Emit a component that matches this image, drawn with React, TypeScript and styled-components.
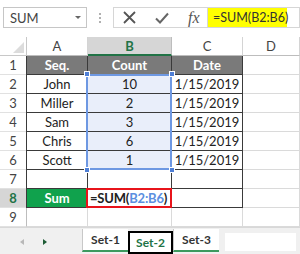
import React from "react";
import styled, { createGlobalStyle, css } from "styled-components";

const Global = createGlobalStyle`
  html, body { margin: 0; padding: 0; background: #fff; }
  body { font-family: Lato, "Open Sans", sans-serif; }
  * { box-sizing: border-box; }
`;

const Page = styled.div`
  width: 300px;
  height: 254px;
  overflow: hidden;
  display: flex;
  flex-direction: column;
  background: #fff;
`;

const FormulaBar = styled.div`
  height: 37px;
  display: flex;
  align-items: flex-start;
  padding: 7px 0 0 3px;
`;

const NameBox = styled.div`
  width: 84px;
  height: 21px;
  border: 1px solid #c6c6c6;
  display: flex;
  align-items: center;
  justify-content: space-between;
  padding: 0 5px 0 6px;
  font-size: 13px;
  color: #444;
`;

const Caret = styled.span`
  width: 0;
  height: 0;
  border-left: 3px solid transparent;
  border-right: 3px solid transparent;
  border-top: 3px solid #666;
`;

const Dots = styled.div`
  width: 26px;
  height: 21px;
  display: flex;
  flex-direction: column;
  align-items: center;
  justify-content: center;
  gap: 2px;
  span { width: 2px; height: 2px; background: #b0b0b0; }
`;

const IconBox = styled.div`
  width: 94px;
  height: 21px;
  border: 1px solid #d6d6d6;
  border-right: none;
  display: flex;
  align-items: center;
  padding-left: 8px;
  gap: 18px;
`;

const Fx = styled.span`
  font-family: "Liberation Serif", serif;
  font-style: italic;
  font-size: 16px;
  color: #555;
  margin-left: 1px;
`;

const FormulaInput = styled.div`
  flex: 1;
  height: 21px;
  border: 1px solid #d6d6d6;
  display: flex;
  align-items: stretch;
`;

const Highlight = styled.span`
  background: #ffff00;
  font-size: 12.5px;
  color: #333;
  display: flex;
  align-items: center;
  padding: 0 0 0 5px;
  width: 79px;
  white-space: nowrap;
`;

const Sheet = styled.div`
  display: grid;
  grid-template-columns: 27px 61px 84px 71px 1fr;
  grid-template-rows: repeat(10, 19px);
`;

const Corner = styled.div`
  border-right: 1px solid #c8c8c8;
  border-bottom: 1px solid #c8c8c8;
  position: relative;
  &::after {
    content: "";
    position: absolute;
    right: 2px;
    bottom: 2px;
    width: 0;
    height: 0;
    border-left: 11px solid transparent;
    border-bottom: 11px solid #dcdcdc;
  }
`;

const ColHead = styled.div<{ $active?: boolean }>`
  display: flex;
  align-items: center;
  justify-content: center;
  font-size: 13px;
  color: #444;
  border-right: 1px solid #d4d4d4;
  border-bottom: 1px solid #bdbdbd;
  ${(p) =>
    p.$active &&
    css`
      background: #d6d6d6;
      color: #217346;
      font-weight: 700;
      border-bottom: 2px solid #217346;
      border-right-color: #bdbdbd;
    `}
`;

const RowHead = styled.div<{ $active?: boolean }>`
  display: flex;
  align-items: center;
  justify-content: center;
  font-size: 13px;
  color: #444;
  border-right: 1px solid #bdbdbd;
  border-bottom: 1px solid #e1e1e1;
  ${(p) =>
    p.$active &&
    css`
      background: #d6d6d6;
      color: #217346;
      font-weight: 700;
    `}
`;

type Kind = "plain" | "head" | "sum" | "sel" | "formula";

const Cell = styled.div<{ $kind?: Kind; $table?: boolean; $left?: boolean; $top?: boolean; $edge?: "top" | "bottom" | "mid" }>`
  position: relative;
  display: flex;
  align-items: center;
  justify-content: center;
  font-size: 13px;
  color: #222;
  white-space: nowrap;
  border-right: 1px solid #dadada;
  border-bottom: 1px solid #dadada;
  ${(p) =>
    p.$table &&
    css`
      border-right-color: #3a3a3a;
      border-bottom-color: #3a3a3a;
    `}
  ${(p) => p.$left && css`box-shadow: -1px 0 0 #3a3a3a;`}
  ${(p) =>
    p.$kind === "head" &&
    css`
      background: #7a7a7a;
      color: #fff;
      font-weight: 700;
    `}
  ${(p) =>
    p.$kind === "sum" &&
    css`
      background: #10a24d;
      color: #fff;
      font-weight: 700;
    `}
  ${(p) =>
    p.$kind === "sel" &&
    css`
      background: #e9eefa;
      &::after {
        content: "";
        position: absolute;
        left: -2px;
        right: -1px;
        top: -1px;
        bottom: -1px;
        border-left: 2px solid #6e98e2;
        border-right: 2px solid #6e98e2;
        ${p.$edge === "top" && "border-top: 2px solid #6e98e2;"}
        ${p.$edge === "bottom" && "border-bottom: 2px solid #6e98e2;"}
        pointer-events: none;
      }
    `}
  ${(p) =>
    p.$kind === "formula" &&
    css`
      font-weight: 700;
      justify-content: flex-start;
      padding-left: 2px;
      letter-spacing: -0.2px;
      &::after {
        content: "";
        position: absolute;
        left: -2px;
        right: -1px;
        top: -1px;
        bottom: -1px;
        border: 2px solid #e8141b;
      }
    `}
`;

const Handle = styled.span<{ $v: "top" | "bottom"; $h: "left" | "right" }>`
  position: absolute;
  z-index: 2;
  width: 6px;
  height: 6px;
  background: #4f7fd6;
  border: 1px solid #fff;
  ${(p) => (p.$v === "top" ? "top: -4px;" : "bottom: -4px;")}
  ${(p) => (p.$h === "left" ? "left: -4px;" : "right: -4px;")}
`;

const Ref = styled.span`
  color: #5b8fe0;
`;

const Paren = styled.span`
  position: relative;
  z-index: 2;
`;

const TabBar = styled.div`
  flex: 1;
  display: flex;
  background: #f0f0f0;
  border-top: 1px solid #d8d8d8;
  padding-top: 1px;
`;

const Nav = styled.div`
  width: 82px;
  display: flex;
  align-items: center;
  padding-left: 20px;
  gap: 19px;
`;

const Arrow = styled.span<{ $dir: "left" | "right"; $on?: boolean }>`
  width: 0;
  height: 0;
  border-top: 3.5px solid transparent;
  border-bottom: 3.5px solid transparent;
  ${(p) =>
    p.$dir === "left"
      ? `border-right: 4px solid ${p.$on ? "#1d5c35" : "#b8b8b8"};`
      : `border-left: 4px solid ${p.$on ? "#1d5c35" : "#b8b8b8"};`}
`;

const Tab = styled.div<{ $active?: boolean }>`
  width: 46px;
  display: flex;
  align-items: center;
  justify-content: center;
  background: #fff;
  font-size: 12px;
  font-weight: 700;
  color: #333;
  border-left: 1px solid #c8c8c8;
  border-bottom: 2px solid #3d9a5f;
  margin-bottom: 2px;
  ${(p) =>
    p.$active &&
    css`
      width: 45px;
      color: #217346;
      border: 2px solid #000;
      margin: 2px 0 0;
    `}
`;

const Scroll = styled.div`
  flex: 1;
  background: #fff;
  margin: 4px 4px 3px 6px;
`;

const rows: [string, string, string][] = [
  ["John", "10", "1/15/2019"],
  ["Miller", "2", "1/15/2019"],
  ["Sam", "3", "1/15/2019"],
  ["Chris", "6", "1/15/2019"],
  ["Scott", "1", "1/15/2019"],
];

export default function App() {
  return (
    <Page>
      <Global />
      <FormulaBar>
        <NameBox>
          SUM
          <Caret />
        </NameBox>
        <Dots>
          <span />
          <span />
          <span />
        </Dots>
        <IconBox>
          <svg width="15" height="15" viewBox="0 0 15 15">
            <path d="M2 2 L13 13 M13 2 L2 13" stroke="#555" strokeWidth="1.8" fill="none" />
          </svg>
          <svg width="14" height="12" viewBox="0 0 14 12">
            <path d="M1 6.5 L5 10.5 L13 1.5" stroke="#666" strokeWidth="2" fill="none" />
          </svg>
          <Fx>fx</Fx>
        </IconBox>
        <FormulaInput>
          <Highlight>=SUM(B2:B6)</Highlight>
        </FormulaInput>
      </FormulaBar>
      <Sheet>
        <Corner />
        <ColHead>A</ColHead>
        <ColHead $active>B</ColHead>
        <ColHead>C</ColHead>
        <ColHead>D</ColHead>

        <RowHead>1</RowHead>
        <Cell $kind="head" $table $left>Seq.</Cell>
        <Cell $kind="head" $table>Count</Cell>
        <Cell $kind="head" $table>Date</Cell>
        <Cell />

        {rows.map(([name, count, date], i) => {
          const edge = i === 0 ? "top" : i === rows.length - 1 ? "bottom" : "mid";
          return (
            <React.Fragment key={name}>
              <RowHead>{i + 2}</RowHead>
              <Cell $table $left>{name}</Cell>
              <Cell $table $kind="sel" $edge={edge}>
                {count}
                {edge === "top" && (
                  <>
                    <Handle $v="top" $h="left" />
                    <Handle $v="top" $h="right" />
                  </>
                )}
                {edge === "bottom" && (
                  <>
                    <Handle $v="bottom" $h="left" />
                    <Handle $v="bottom" $h="right" />
                  </>
                )}
              </Cell>
              <Cell $table>{date}</Cell>
              <Cell />
            </React.Fragment>
          );
        })}

        <RowHead>7</RowHead>
        <Cell $table $left />
        <Cell $table />
        <Cell $table />
        <Cell />

        <RowHead $active>8</RowHead>
        <Cell $kind="sum" $table $left>Sum</Cell>
        <Cell $kind="formula" $table>
          =SUM(<Ref>B2:B6</Ref><Paren>)</Paren>
        </Cell>
        <Cell $table />
        <Cell />

        <RowHead>9</RowHead>
        <Cell />
        <Cell />
        <Cell />
        <Cell />
      </Sheet>
      <TabBar>
        <Nav>
          <Arrow $dir="left" />
          <Arrow $dir="right" $on />
        </Nav>
        <Tab>Set-1</Tab>
        <Tab $active>Set-2</Tab>
        <Tab>Set-3</Tab>
        <Scroll />
      </TabBar>
    </Page>
  );
}
